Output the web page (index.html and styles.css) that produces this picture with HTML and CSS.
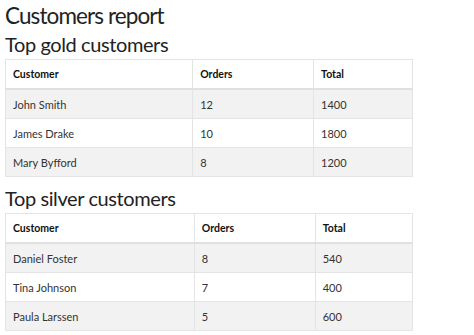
FILE: index.html
```html
<!DOCTYPE html>
<html>
<head>
<meta charset="utf-8">
<link rel="stylesheet" href="styles.css">
</head>
<body>
<h1 class="title">Customers report</h1>
<h2 class="section">Top gold customers</h2>
<table class="report">
  <thead><tr><th class="c-name">Customer</th><th class="c-orders">Orders</th><th>Total</th></tr></thead>
  <tbody>
    <tr><td>John Smith</td><td>12</td><td>1400</td></tr>
    <tr><td>James Drake</td><td>10</td><td>1800</td></tr>
    <tr><td>Mary Byfford</td><td>8</td><td>1200</td></tr>
  </tbody>
</table>
<h2 class="section">Top silver customers</h2>
<table class="report silver">
  <thead><tr><th class="c-name">Customer</th><th class="c-orders">Orders</th><th>Total</th></tr></thead>
  <tbody>
    <tr><td>Daniel Foster</td><td>8</td><td>540</td></tr>
    <tr><td>Tina Johnson</td><td>7</td><td>400</td></tr>
    <tr><td>Paula Larssen</td><td>5</td><td>600</td></tr>
  </tbody>
</table>
</body>
</html>
```
FILE: styles.css
```css
html, body { margin: 0; padding: 0; background: #fff; }
body {
  padding: 1px 5px 0;
  font-family: Lato, "Noto Sans", sans-serif;
  color: #212529;
}
.title {
  margin: 0;
  font-size: 22.5px;
  letter-spacing: -0.9px;
  line-height: 30px;
  font-weight: 400;
  color: #222;
}
.section {
  margin: 1px 0 3px;
  font-size: 20px;
  letter-spacing: -0.4px;
  line-height: 24px;
  font-weight: 400;
  color: #222;
}
.report {
  width: 408px;
  border-collapse: collapse;
  font-size: 11px;
  margin-bottom: 9px;
  border: 1px solid #e4e4e4;
}
.report th, .report td {
  text-align: left;
  padding: 6.5px 7px;
  line-height: 15px;
  border: 1px solid #e4e4e4;
}
.report .c-name { width: 46%; }
.report .c-orders { width: 29.7%; }
.report.silver .c-name { width: 46.4%; }
.report th { font-weight: 700; font-size: 10.5px; color: #111; }
.report thead th { border-bottom: 2px solid #e0e0e0; }
.report tbody tr:nth-child(odd) { background: #f2f2f2; }
.report td { color: #333; }
```
